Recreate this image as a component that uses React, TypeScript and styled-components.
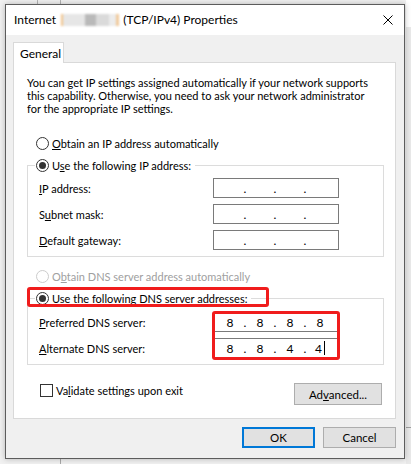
import React from "react";
import styled, { createGlobalStyle, css } from "styled-components";

const GlobalStyle = createGlobalStyle`
    html, body {
        margin: 0;
        padding: 0;
        background: #efefef;
    }
    body {
        font-family: Lato, "Liberation Sans", Arial, sans-serif;
        font-size: 11px;
        color: #000000;
    }
`;

type Octets = [string, string, string, string];

const EMPTY: Octets = ["", "", "", ""];

const IpField: React.FC<{ value?: Octets; caret?: boolean }> = ({ value = EMPTY, caret }) => (
    <IpBox>
        {value.map((v, i) => (
            <React.Fragment key={i}>
                <Octet>
                    {v}
                    {caret && i === 3 && <Caret />}
                </Octet>
                {i < 3 && <Dot>.</Dot>}
            </React.Fragment>
        ))}
    </IpBox>
);

const Radio: React.FC<{ checked?: boolean; disabled?: boolean }> = ({ checked, disabled }) => (
    <RadioCircle disabled={disabled}>{checked && <RadioDot />}</RadioCircle>
);

const App: React.FC = () => {
    return (
        <>
            <GlobalStyle />
            <Desktop>
                <Dialog>
                    <TitleBar>
                        <Title>
                            Internet <Blurred /> (TCP/IPv4) Properties
                        </Title>
                        <CloseButton>
                            <svg width="10" height="10" viewBox="0 0 10 10">
                                <path d="M0.5 0.5 L9.5 9.5 M9.5 0.5 L0.5 9.5" stroke="#000" strokeWidth="1" />
                            </svg>
                        </CloseButton>
                    </TitleBar>

                    <Body>
                        <Tabs>
                            <Tab>General</Tab>
                        </Tabs>
                        <Panel>
                            <Description>
                                You can get IP settings assigned automatically if your network supports<br />
                                this capability. Otherwise, you need to ask your network administrator<br />
                                for the appropriate IP settings.
                            </Description>

                            <OptionRow>
                                <Radio />
                                <span><u>O</u>btain an IP address automatically</span>
                            </OptionRow>

                            <GroupBox>
                                <Legend>
                                    <Radio checked />
                                    <span>U<u>s</u>e the following IP address:</span>
                                </Legend>
                                <Fields>
                                    <FieldLabel><u>I</u>P address:</FieldLabel>
                                    <IpField />
                                    <FieldLabel>S<u>u</u>bnet mask:</FieldLabel>
                                    <IpField />
                                    <FieldLabel><u>D</u>efault gateway:</FieldLabel>
                                    <IpField />
                                </Fields>
                            </GroupBox>

                            <OptionRow disabled spaced>
                                <Radio disabled />
                                <span>O<u>b</u>tain DNS server address automatically</span>
                            </OptionRow>

                            <GroupBox>
                                <Legend highlight>
                                    <Radio checked />
                                    <span>Us<u>e</u> the following DNS server addresses:</span>
                                </Legend>
                                <Fields dns>
                                    <DnsLabels>
                                        <FieldLabel><u>P</u>referred DNS server:</FieldLabel>
                                        <FieldLabel><u>A</u>lternate DNS server:</FieldLabel>
                                    </DnsLabels>
                                    <DnsInputs>
                                        <IpField value={["8", "8", "8", "8"]} />
                                        <IpField value={["8", "8", "4", "4"]} caret />
                                    </DnsInputs>
                                </Fields>
                            </GroupBox>

                            <BottomRow>
                                <CheckLabel>
                                    <CheckBox />
                                    <span>Va<u>l</u>idate settings upon exit</span>
                                </CheckLabel>
                                <Button wide>Ad<u>v</u>anced...</Button>
                            </BottomRow>
                        </Panel>
                    </Body>

                    <Footer>
                        <Button primary>OK</Button>
                        <Button>Cancel</Button>
                    </Footer>
                </Dialog>
            </Desktop>
        </>
    );
};

const Desktop = styled.div`
    width: 411px;
    height: 464px;
    box-sizing: border-box;
    padding: 4px 6px 5px 5px;
    overflow: hidden;
    background:
        linear-gradient(#ffffff, #ffffff) 406px 0 / 5px 27px no-repeat,
        linear-gradient(#a0a0a0, #a0a0a0) 406px 427px / 5px 1px no-repeat,
        linear-gradient(#e9e9e9, #e9e9e9) 406px 27px / 5px 437px no-repeat,
        linear-gradient(#a9a9a9, #a9a9a9) 60px 459px / 1px 5px no-repeat,
        linear-gradient(#b4b4b4, #b4b4b4) 37px 0 / 1px 4px no-repeat,
        linear-gradient(#b4b4b4, #b4b4b4) 60px 0 / 1px 4px no-repeat,
        #f1f1f1;
`;

const Dialog = styled.div`
    display: flex;
    flex-direction: column;
    height: 100%;
    box-sizing: border-box;
    border: 1px solid #5c5c5c;
    background: #f0f0f0;
    box-shadow: 0 0 6px rgba(0, 0, 0, 0.25);
`;

const TitleBar = styled.div`
    display: flex;
    align-items: center;
    justify-content: space-between;
    height: 30px;
    padding: 0 11px 0 8px;
    background: #ffffff;
`;

const Title = styled.div`
    display: flex;
    align-items: center;
    white-space: pre;
    font-size: 12px;
    line-height: 16px;
`;

const Blurred = styled.span`
    display: inline-block;
    width: 58px;
    height: 12px;
    margin: 0 1px 0 2px;
    background: linear-gradient(
        to right,
        #f2c48a 0 2px,
        #e6e6e6 2px 24px,
        #b9b9b9 24px 35px,
        #dadada 35px 48px,
        #ececec 48px 55px,
        #f0c99a 55px 58px
    );
    filter: blur(1.2px);
`;

const CloseButton = styled.div`
    display: flex;
    width: 10px;
    height: 10px;
`;

const Body = styled.div`
    display: flex;
    flex-direction: column;
    padding: 7px 8px 0 7px;
`;

const Tabs = styled.div`
    display: flex;
    margin-bottom: -1px;
    position: relative;
    z-index: 1;
`;

const Tab = styled.div`
    width: 43px;
    height: 20px;
    padding-left: 6px;
    border: 1px solid #d9d9d9;
    border-bottom: none;
    background: #ffffff;
    line-height: 22px;
    font-size: 12px;
`;

const Panel = styled.div`
    display: flex;
    flex-direction: column;
    padding: 13px 11px 13px 13px;
    border: 1px solid #d9d9d9;
    background: #ffffff;
`;

const Description = styled.p`
    margin: 0;
    line-height: 13px;
    white-space: nowrap;
`;

const OptionRow = styled.div<{ disabled?: boolean; spaced?: boolean }>`
    display: flex;
    align-items: center;
    gap: 3px;
    height: 20px;
    margin: ${(p) => (p.spaced ? "9px 0 0 9px" : "18px 0 0 9px")};
    color: ${(p) => (p.disabled ? "#a0a0a0" : "#000000")};
`;

const RadioCircle = styled.span<{ disabled?: boolean }>`
    display: flex;
    align-items: center;
    justify-content: center;
    width: 11px;
    height: 11px;
    border: 1px solid ${(p) => (p.disabled ? "#cccccc" : "#333333")};
    border-radius: 50%;
    background: #ffffff;
    flex: none;
`;

const RadioDot = styled.span`
    width: 7px;
    height: 7px;
    border-radius: 50%;
    background: #333333;
`;

const GroupBox = styled.div`
    display: flex;
    flex-direction: column;
    margin-top: 12px;
    padding: 0 44px 6px 11px;
    border: 1px solid #dcdcdc;
`;

const Legend = styled.div<{ highlight?: boolean }>`
    position: relative;
    align-self: flex-start;
    display: flex;
    align-items: center;
    gap: 3px;
    height: 20px;
    margin: -11px 0 0 -4px;
    padding: 0 4px 0 1px;
    background: #ffffff;

    ${(p) =>
        p.highlight &&
        css`
            &::after {
                content: "";
                position: absolute;
                left: -8px;
                top: -1px;
                right: -18px;
                height: 14px;
                border: 3px solid #f01c1c;
                border-radius: 3px;
            }
        `}
`;

const Fields = styled.div<{ dns?: boolean }>`
    display: grid;
    grid-template-columns: 1fr 126px;
    row-gap: 6px;
    align-items: center;
    margin-top: ${(p) => (p.dns ? "4px" : "3px")};
`;

const DnsLabels = styled.div`
    display: flex;
    flex-direction: column;
    gap: 6px;

    & > * {
        height: 20px;
        display: flex;
        align-items: center;
    }
`;

const DnsInputs = styled.div`
    position: relative;
    display: flex;
    flex-direction: column;
    gap: 6px;

    &::after {
        content: "";
        position: absolute;
        left: -1px;
        top: -1px;
        right: -1px;
        bottom: -2px;
        border: 3px solid #f01c1c;
        border-radius: 3px;
    }
`;

const FieldLabel = styled.div``;

const IpBox = styled.div`
    display: flex;
    align-items: center;
    height: 20px;
    box-sizing: border-box;
    padding-left: 3px;
    border: 1px solid #7a7a7a;
    background: #ffffff;
    font-size: 12px;
`;

const Octet = styled.span`
    display: flex;
    align-items: center;
    justify-content: center;
    width: 26px;
`;

const Dot = styled.span`
    width: 4px;
    text-align: center;
`;

const Caret = styled.span`
    display: inline-block;
    width: 1px;
    height: 14px;
    margin-left: 2px;
    background: #000000;
`;

const BottomRow = styled.div`
    display: flex;
    justify-content: space-between;
    align-items: flex-start;
    margin-top: 18px;
    padding: 0 2px 0 13px;
`;

const CheckLabel = styled.div`
    display: flex;
    align-items: center;
    gap: 3px;
    height: 14px;
`;

const CheckBox = styled.span`
    width: 11px;
    height: 11px;
    border: 1px solid #333333;
    background: #ffffff;
`;

const Button = styled.button<{ primary?: boolean; wide?: boolean }>`
    width: ${(p) => (p.wide ? "88px" : "73px")};
    height: ${(p) => (p.wide ? "22px" : "21px")};
    padding: 0;
    border: ${(p) => (p.primary ? "2px solid #0078d7" : "1px solid #adadad")};
    background: #e1e1e1;
    font-family: inherit;
    font-size: 11.5px;
    color: #000000;
`;

const Footer = styled.div`
    display: flex;
    justify-content: flex-end;
    gap: 8px;
    padding: 8px 8px 0 0;
`;

export default App;
